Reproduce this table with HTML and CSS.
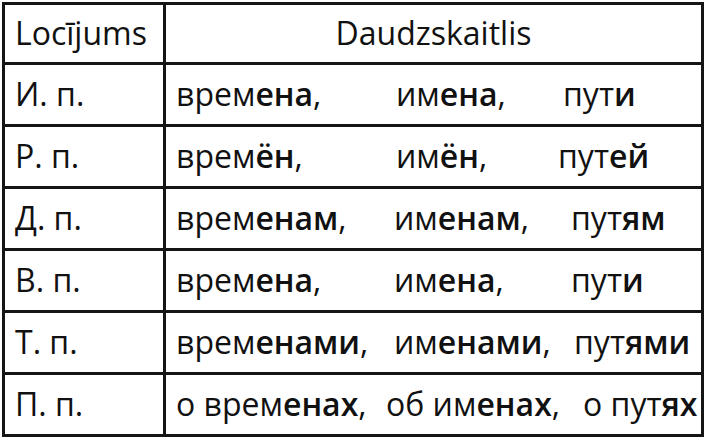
FILE: index.html
```html
<!DOCTYPE html>
<html lang="lv">
<head>
<meta charset="utf-8">
<title>Locījums</title>
<link rel="stylesheet" href="styles.css">
</head>
<body>
<table class="decl">
  <thead>
    <tr>
      <th class="case">Locījums</th>
      <th class="forms-head">Daudzskaitlis</th>
    </tr>
  </thead>
  <tbody>
    <tr>
      <td class="case">И. п.</td>
      <td><div class="forms r1"><span>врем<b>ена</b>,</span><span>им<b>ена</b>,</span><span>пут<b>и</b></span></div></td>
    </tr>
    <tr>
      <td class="case">Р. п.</td>
      <td><div class="forms r2"><span>врем<b>ён</b>,</span><span>им<b>ён</b>,</span><span>пут<b>ей</b></span></div></td>
    </tr>
    <tr>
      <td class="case">Д. п.</td>
      <td><div class="forms r3"><span>врем<b>енам</b>,</span><span>им<b>енам</b>,</span><span>пут<b>ям</b></span></div></td>
    </tr>
    <tr>
      <td class="case">В. п.</td>
      <td><div class="forms r4"><span>врем<b>ена</b>,</span><span>им<b>ена</b>,</span><span>пут<b>и</b></span></div></td>
    </tr>
    <tr>
      <td class="case">Т. п.</td>
      <td><div class="forms r5"><span>врем<b>енами</b>,</span><span>им<b>енами</b>,</span><span>пут<b>ями</b></span></div></td>
    </tr>
    <tr>
      <td class="case">П. п.</td>
      <td><div class="forms r6"><span>о врем<b>енах</b>,</span><span>об им<b>енах</b>,</span><span>о пут<b>ях</b></span></div></td>
    </tr>
  </tbody>
</table>
</body>
</html>
```
FILE: styles.css
```css
html, body {
  margin: 0;
  padding: 0;
  background: #fff;
}
body {
  padding: 2px 0 0 2px;
  font-family: "Open Sans", "Noto Sans", sans-serif;
  color: #111;
}
.decl {
  border-collapse: collapse;
  width: 702px;
  font-size: 32px;
}
.decl th,
.decl td {
  border: 3px solid #151515;
  padding: 0 0 0 10px;
  font-weight: 400;
  text-align: left;
  height: 59px;
  vertical-align: middle;
  line-height: 1.2;
  white-space: nowrap;
}
.decl thead th {
  height: 57px;
}
.decl .case {
  width: 148px;
}
.decl .forms-head {
  text-align: center;
  padding: 0;
}
.decl b {
  font-weight: 600;
}
.forms {
  display: grid;
}
.r1 { grid-template-columns: 220px 167px auto; }
.r2 { grid-template-columns: 220px 162px auto; }
.r3 { grid-template-columns: 218px 177px auto; }
.r4 { grid-template-columns: 218px 177px auto; }
.r5 { grid-template-columns: 218px 180px auto; }
.r6 { grid-template-columns: 210px 197px auto; }
```
